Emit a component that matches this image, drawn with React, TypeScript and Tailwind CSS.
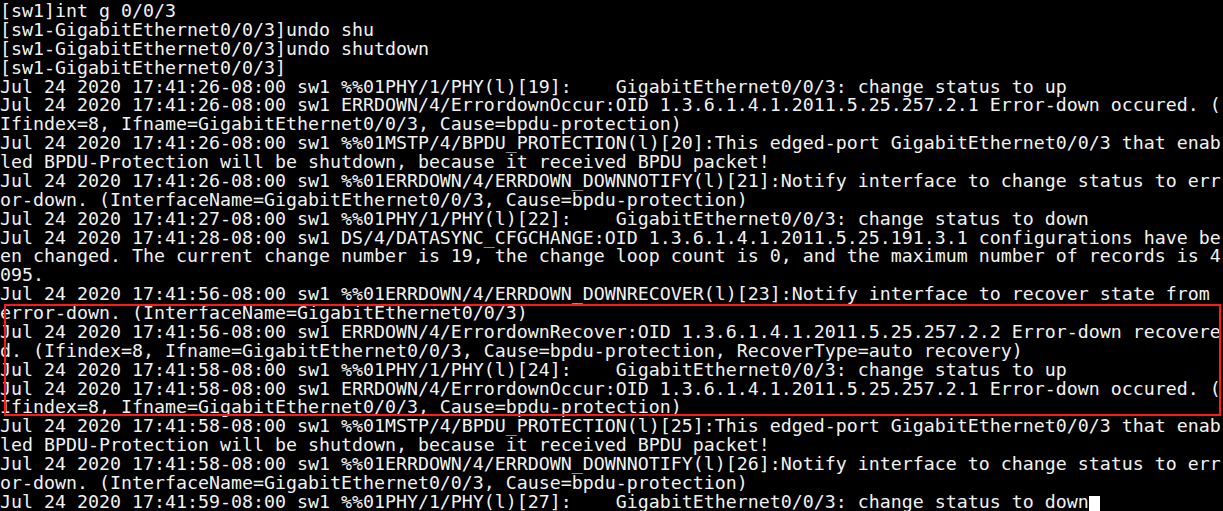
import React from "react";

const lines: string[] = [
  "[sw1]int g 0/0/3",
  "[sw1-GigabitEthernet0/0/3]undo shu",
  "[sw1-GigabitEthernet0/0/3]undo shutdown",
  "[sw1-GigabitEthernet0/0/3]",
  "Jul 24 2020 17:41:26-08:00 sw1 %%01PHY/1/PHY(l)[19]:    GigabitEthernet0/0/3: change status to up",
  "Jul 24 2020 17:41:26-08:00 sw1 ERRDOWN/4/ErrordownOccur:OID 1.3.6.1.4.1.2011.5.25.257.2.1 Error-down occured. (",
  "Ifindex=8, Ifname=GigabitEthernet0/0/3, Cause=bpdu-protection)",
  "Jul 24 2020 17:41:26-08:00 sw1 %%01MSTP/4/BPDU_PROTECTION(l)[20]:This edged-port GigabitEthernet0/0/3 that enab",
  "led BPDU-Protection will be shutdown, because it received BPDU packet!",
  "Jul 24 2020 17:41:26-08:00 sw1 %%01ERRDOWN/4/ERRDOWN_DOWNNOTIFY(l)[21]:Notify interface to change status to err",
  "or-down. (InterfaceName=GigabitEthernet0/0/3, Cause=bpdu-protection)",
  "Jul 24 2020 17:41:27-08:00 sw1 %%01PHY/1/PHY(l)[22]:    GigabitEthernet0/0/3: change status to down",
  "Jul 24 2020 17:41:28-08:00 sw1 DS/4/DATASYNC_CFGCHANGE:OID 1.3.6.1.4.1.2011.5.25.191.3.1 configurations have be",
  "en changed. The current change number is 19, the change loop count is 0, and the maximum number of records is 4",
  "095.",
  "Jul 24 2020 17:41:56-08:00 sw1 %%01ERRDOWN/4/ERRDOWN_DOWNRECOVER(l)[23]:Notify interface to recover state from ",
];

const boxed: string[] = [
  "error-down. (InterfaceName=GigabitEthernet0/0/3)",
  "Jul 24 2020 17:41:56-08:00 sw1 ERRDOWN/4/ErrordownRecover:OID 1.3.6.1.4.1.2011.5.25.257.2.2 Error-down recovere",
  "d. (Ifindex=8, Ifname=GigabitEthernet0/0/3, Cause=bpdu-protection, RecoverType=auto recovery)",
  "Jul 24 2020 17:41:58-08:00 sw1 %%01PHY/1/PHY(l)[24]:    GigabitEthernet0/0/3: change status to up",
  "Jul 24 2020 17:41:58-08:00 sw1 ERRDOWN/4/ErrordownOccur:OID 1.3.6.1.4.1.2011.5.25.257.2.1 Error-down occured. (",
  "Ifindex=8, Ifname=GigabitEthernet0/0/3, Cause=bpdu-protection)",
];

const after: string[] = [
  "Jul 24 2020 17:41:58-08:00 sw1 %%01MSTP/4/BPDU_PROTECTION(l)[25]:This edged-port GigabitEthernet0/0/3 that enab",
  "led BPDU-Protection will be shutdown, because it received BPDU packet!",
  "Jul 24 2020 17:41:58-08:00 sw1 %%01ERRDOWN/4/ERRDOWN_DOWNNOTIFY(l)[26]:Notify interface to change status to err",
  "or-down. (InterfaceName=GigabitEthernet0/0/3, Cause=bpdu-protection)",
];

const last = "Jul 24 2020 17:41:59-08:00 sw1 %%01PHY/1/PHY(l)[27]:    GigabitEthernet0/0/3: change status to down";

function Line({ text }: { text: string }) {
  return <div className="h-[18.88px] leading-[18.88px] whitespace-pre">{text}</div>;
}

export default function App() {
  return (
    <div
      className="w-[1223px] h-[511px] bg-black overflow-hidden flex flex-col pt-[2px] text-[#f2f2f2] text-[18.27px]"
      style={{ fontFamily: '"DejaVu Sans Mono", "Liberation Mono", monospace' }}
    >
      {lines.map((l, i) => (
        <Line key={"a" + i} text={l} />
      ))}
      <div className="relative">
        {boxed.map((l, i) => (
          <Line key={"b" + i} text={l} />
        ))}
        <div className="absolute top-0 left-[4px] right-[2px] bottom-[1px] border-2 border-[#ff1a1a]" />
      </div>
      {after.map((l, i) => (
        <Line key={"c" + i} text={l} />
      ))}
      <div className="h-[18.88px] leading-[18.88px] whitespace-pre flex items-end">
        <span>{last}</span>
        <span className="inline-block w-[11px] h-[16px] bg-white" />
      </div>
    </div>
  );
}
